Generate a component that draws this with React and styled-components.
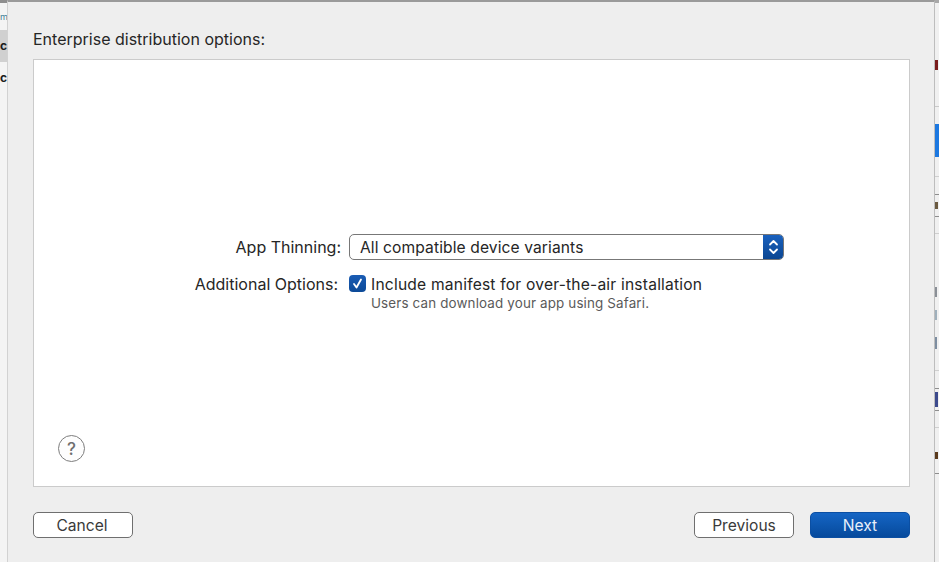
import React from 'react'
import styled, { createGlobalStyle } from 'styled-components'

const GlobalStyle = createGlobalStyle`
  html, body { margin: 0; padding: 0; height: 100%; background: #f5f5f5; }
  #root { height: 100%; }
  * { box-sizing: border-box; }
`

const Screen = styled.div`
  width: 939px;
  height: 562px;
  display: flex;
  overflow: hidden;
  font-family: Inter, "Liberation Sans", sans-serif;
  color: #262626;
  background: #f6f6f6;
`

const LeftEdge = styled.div`
  width: 7px;
  flex: none;
  display: flex;
  flex-direction: column;
  border-top: 3px solid #8f8f8f;
  background: #f4f4f4;
  overflow: hidden;
`

const LeftRow = styled.div`
  height: ${(p) => p.$h}px;
  flex: none;
  background: ${(p) => p.$bg || 'transparent'};
  color: ${(p) => p.$color || '#1c1c1c'};
  font-size: ${(p) => p.$size || 12}px;
  font-weight: ${(p) => p.$weight || 700};
  line-height: ${(p) => p.$h}px;
  white-space: nowrap;
`

const Sheet = styled.div`
  flex: none;
  width: 928px;
  height: 562px;
  display: flex;
  flex-direction: column;
  padding: 28px 24px 24px 25px;
  background: #eeeeee;
  border-top: 2px solid #9a9a9a;
  border-left: 1px solid #d2d2d2;
  border-right: 1px solid #bdbdbd;
`

const Title = styled.div`
  font-size: 16px;
  line-height: 18px;
  margin-bottom: 11px;
`

const Panel = styled.div`
  position: relative;
  flex: none;
  height: 428px;
  background: #ffffff;
  border: 1px solid #cbcbcb;
  display: flex;
  flex-direction: column;
  padding-top: 174px;
`

const FormRow = styled.div`
  display: flex;
  align-items: ${(p) => p.$align || 'center'};
  margin-bottom: ${(p) => p.$mb || 0}px;
`

const Label = styled.div`
  width: 309px;
  flex: none;
  text-align: right;
  font-size: 16px;
  line-height: 18px;
  padding-right: ${(p) => p.$pr}px;
`

const Select = styled.div`
  width: 435px;
  height: 26px;
  margin-left: 6px;
  display: flex;
  align-items: stretch;
  border-radius: 5px;
  overflow: hidden;
  border: 1px solid #777777;
  background: #ffffff;
`

const SelectText = styled.div`
  flex: 1;
  padding-left: 10px;
  padding-top: 1px;
  font-size: 15.6px;
  line-height: 24px;
  letter-spacing: 0.1px;
`

const Stepper = styled.div`
  width: 21px;
  display: flex;
  align-items: center;
  justify-content: center;
  margin: -1px;
  background: linear-gradient(#1a62c0, #0a4590);
`

const CheckBox = styled.div`
  width: 17px;
  height: 17px;
  flex: none;
  margin-left: 6px;
  display: flex;
  align-items: center;
  justify-content: center;
  border-radius: 4px;
  background: linear-gradient(#1a5cb4, #0c4a98);
`

const OptionText = styled.div`
  margin-left: 5px;
  padding-top: 1px;
`

const OptionTitle = styled.div`
  font-size: 15.6px;
  line-height: 18px;
  letter-spacing: 0.2px;
`

const OptionHint = styled.div`
  font-size: 13.4px;
  line-height: 19px;
  color: #5a5a5a;
  letter-spacing: 0.15px;
`

const HelpButton = styled.div`
  position: absolute;
  left: 24px;
  bottom: 24px;
  width: 27px;
  height: 27px;
  display: flex;
  align-items: center;
  justify-content: center;
  border: 1.5px solid #7d7d7d;
  border-radius: 50%;
  background: #fdfdfd;
  color: #6e6e6e;
  font-size: 17px;
  font-weight: 500;
`

const Footer = styled.div`
  display: flex;
  justify-content: space-between;
  margin-top: 25px;
`

const Group = styled.div`
  display: flex;
  gap: 16px;
`

const Button = styled.div`
  width: 100px;
  height: 26px;
  display: flex;
  align-items: center;
  justify-content: center;
  border-radius: 5px;
  font-size: 15.6px;
  padding-right: ${(p) => (p.$nudge ? 2 : 0)}px;
  border: 1px solid ${(p) => (p.$primary ? '#0b4fa3' : '#6f6f6f')};
  background: ${(p) => (p.$primary ? 'linear-gradient(#1565c4, #064a9c)' : '#ffffff')};
  color: ${(p) => (p.$primary ? '#e8f0fa' : '#3a3a3a')};
`

const RightEdge = styled.div`
  flex: 1;
  display: flex;
  flex-direction: column;
  border-top: 3px solid #a8a8a8;
  background: #f0f0f0;
  overflow: hidden;
`

const RightRow = styled.div`
  height: ${(p) => p.$h}px;
  flex: none;
  display: flex;
  align-items: center;
  background: ${(p) => p.$bg || 'transparent'};
  border-bottom: ${(p) => (p.$line ? `1px solid ${p.$line}` : 'none')};
`

const Dot = styled.div`
  width: ${(p) => p.$w || 3}px;
  height: ${(p) => p.$ht || 8}px;
  background: ${(p) => p.$color};
`

export default function App() {
  return (
    <Screen>
      <GlobalStyle />
      <LeftEdge>
        <LeftRow $h={27} $color="#3d7f96" $weight={400} $size={9}>m</LeftRow>
        <LeftRow $h={32} $bg="#d0d0d0">c</LeftRow>
        <LeftRow $h={32}>c</LeftRow>
        <LeftRow $h={468} />
      </LeftEdge>
      <Sheet>
        <Title>Enterprise distribution options:</Title>
        <Panel>
          <FormRow $mb={15}>
            <Label $pr={2}>App Thinning:</Label>
            <Select>
              <SelectText>All compatible device variants</SelectText>
              <Stepper>
                <svg width="11" height="18" viewBox="0 0 11 18" fill="none" stroke="#ffffff" strokeWidth="1.8" strokeLinecap="round" strokeLinejoin="round">
                  <path d="M2 6.5 5.5 3 9 6.5" />
                  <path d="M2 11.5 5.5 15 9 11.5" />
                </svg>
              </Stepper>
            </Select>
          </FormRow>
          <FormRow $align="flex-start">
            <Label $pr={5}>Additional Options:</Label>
            <CheckBox>
              <svg width="13" height="13" viewBox="0 0 13 13" fill="none" stroke="#ffffff" strokeWidth="1.8" strokeLinecap="round" strokeLinejoin="round">
                <path d="M3 7 5.5 10.5 10 2.5" />
              </svg>
            </CheckBox>
            <OptionText>
              <OptionTitle>Include manifest for over-the-air installation</OptionTitle>
              <OptionHint>Users can download your app using Safari.</OptionHint>
            </OptionText>
          </FormRow>
          <HelpButton>?</HelpButton>
        </Panel>
        <Footer>
          <Button $nudge>Cancel</Button>
          <Group>
            <Button>Previous</Button>
            <Button $primary>Next</Button>
          </Group>
        </Footer>
      </Sheet>
      <RightEdge>
        <RightRow $h={57} />
        <RightRow $h={10}><Dot $color="#7a1c1c" $w={3} $ht={10} /></RightRow>
        <RightRow $h={37} $line="#c9c9c9" />
        <RightRow $h={17} />
        <RightRow $h={33} $bg="#1c78e0" />
        <RightRow $h={20} $line="#cfcfcf" />
        <RightRow $h={18} $line="#8e8e8e" />
        <RightRow $h={22} $line="#8e8e8e"><Dot $color="#6b5a40" $w={3} $ht={7} /></RightRow>
        <RightRow $h={17} $line="#cfcfcf" />
        <RightRow $h={53} />
        <RightRow $h={10}><Dot $color="#8a8f96" $w={2} $ht={10} /></RightRow>
        <RightRow $h={13} />
        <RightRow $h={10}><Dot $color="#9fb0bc" $w={2} $ht={10} /></RightRow>
        <RightRow $h={17} />
        <RightRow $h={12}><Dot $color="#7d8da0" $w={2} $ht={12} /></RightRow>
        <RightRow $h={22} $line="#cfcfcf" />
        <RightRow $h={18} $line="#8e8e8e" />
        <RightRow $h={22} $line="#8e8e8e"><Dot $color="#3c4a8c" $w={3} $ht={15} /></RightRow>
        <RightRow $h={17} $line="#cfcfcf" />
        <RightRow $h={22} />
        <RightRow $h={10}><Dot $color="#5a3a1c" $w={3} $ht={7} /></RightRow>
        <RightRow $h={14} $line="#8e8e8e" />
      </RightEdge>
    </Screen>
  )
}
